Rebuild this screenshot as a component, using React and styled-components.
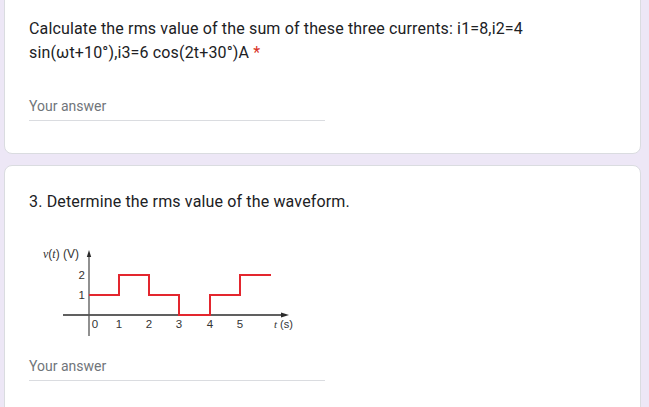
import styled, { createGlobalStyle } from 'styled-components'

const GlobalStyle = createGlobalStyle`
  html, body {
    margin: 0;
    padding: 0;
    background: #ede7f6;
  }
  body {
    font-family: Roboto, 'Liberation Sans', Arial, sans-serif;
    color: #202124;
    overflow: hidden;
  }
`

const Page = styled.div`
  display: flex;
  flex-direction: column;
  gap: 11px;
  margin-top: -8px;
  padding: 0 8px 0 4px;
`

const Card = styled.section`
  background: #fff;
  border: 1px solid #dadce0;
  border-radius: 8px;
  padding: 24px 24px ${(p) => p.$bottom || 24}px;
`

const QuestionTitle = styled.div`
  font-size: 16px;
  line-height: 24px;
  letter-spacing: 0.15px;
  max-width: 510px;
`

const Required = styled.span`
  color: #d93025;
`

const Answer = styled.div`
  width: 296px;
  height: 31px;
  margin-top: ${(p) => p.$top}px;
  border-bottom: 1px solid #dadce0;
  font-size: 14px;
  line-height: 34px;
  color: #70757a;
`

const Figure = styled.svg`
  display: block;
  margin-top: 25px;
  font-family: 'Liberation Sans', Arial, sans-serif;
`

const steps = [
  [60, 56], [90, 56], [90, 36], [120, 36], [120, 56], [150, 56], [150, 76],
  [181, 76], [181, 56], [211, 56], [211, 36], [242, 36],
]

const ticks = [
  ['0', 66], ['1', 90], ['2', 120], ['3', 150], ['4', 181], ['5', 211],
]

const Waveform = () => (
  <Figure width="270" height="100" viewBox="0 0 270 100">
    <line x1="34" y1="76" x2="254" y2="76" stroke="#2b2b2b" strokeWidth="1.3" />
    <polygon points="260,76 252,73.5 252,78.5" fill="#2b2b2b" />
    <line x1="60" y1="16" x2="60" y2="97" stroke="#555" strokeWidth="1.3" />
    <polygon points="60,11 57.8,18 62.2,18" fill="#2b2b2b" />
    <polyline
      points={steps.map((p) => p.join(',')).join(' ')}
      fill="none"
      stroke="#e3262e"
      strokeWidth="2"
    />
    <text x="14" y="19" fontSize="12" fill="#333">
      <tspan fontFamily="'Liberation Serif', serif" fontStyle="italic">v</tspan>
      <tspan>(</tspan>
      <tspan fontFamily="'Liberation Serif', serif" fontStyle="italic">t</tspan>
      <tspan>) (V)</tspan>
    </text>
    <text x="56" y="40" fontSize="11.5" fill="#333" textAnchor="end">2</text>
    <text x="56" y="60" fontSize="11.5" fill="#333" textAnchor="end">1</text>
    {ticks.map(([label, x]) => (
      <text key={label} x={x} y="89" fontSize="11.5" fill="#333" textAnchor="middle">
        {label}
      </text>
    ))}
    <text x="245" y="89" fontSize="11" fill="#333">
      <tspan fontFamily="'Liberation Serif', serif" fontStyle="italic">t</tspan>
      <tspan> (s)</tspan>
    </text>
  </Figure>
)

const App = () => (
  <>
    <GlobalStyle />
    <Page>
      <Card $bottom={32}>
        <QuestionTitle>
          Calculate the rms value of the sum of these three currents: i1=8,i2=4
          sin(ωt+10°),i3=6 cos(2t+30°)A <Required>*</Required>
        </QuestionTitle>
        <Answer $top={24}>Your answer</Answer>
      </Card>
      <Card $bottom={40}>
        <QuestionTitle>3. Determine the rms value of the waveform.</QuestionTitle>
        <Waveform />
        <Answer $top={10}>Your answer</Answer>
      </Card>
    </Page>
  </>
)

export default App
